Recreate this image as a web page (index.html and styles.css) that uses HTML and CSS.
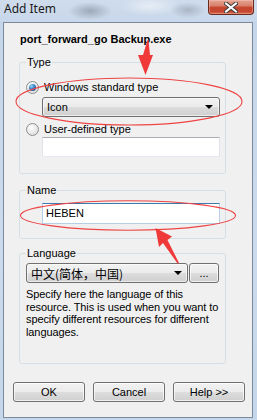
FILE: index.html
```html
<!DOCTYPE html>
<html lang="en">
<head>
  <meta charset="UTF-8">
  <title>Add Item</title>
  <link rel="stylesheet" href="styles.css">
</head>
<body>
  <div class="window">
    <div class="titlebar">
      <span class="title">Add Item</span>
      <span class="close-btn">
        <svg width="14" height="11" viewBox="0 0 14 11">
          <path d="M2 1.5 L12 9.5 M12 1.5 L2 9.5" stroke="#3a3a3a" stroke-width="4" stroke-linecap="square"/>
          <path d="M2 1.5 L12 9.5 M12 1.5 L2 9.5" stroke="#ffffff" stroke-width="2" stroke-linecap="square"/>
        </svg>
      </span>
    </div>

    <div class="client">
      <div class="filename">port_forward_go Backup.exe</div>

      <fieldset class="group group-type">
        <legend>Type</legend>
        <div class="radio-row"><span class="radio checked"></span>Windows standard type</div>
        <div class="combo indent"><span>Icon</span><span class="combo-arrow"></span></div>
        <div class="radio-row second"><span class="radio"></span>User-defined type</div>
        <div class="textbox indent"></div>
      </fieldset>

      <fieldset class="group group-name">
        <legend>Name</legend>
        <div class="textbox focused indent">HEBEN</div>
      </fieldset>

      <fieldset class="group group-lang">
        <legend>Language</legend>
        <div class="lang-row">
          <div class="combo lang-combo"><span class="cjk">中文(简体，中国)</span><span class="combo-arrow"></span></div>
          <div class="button dots">...</div>
        </div>
        <p class="desc">Specify here the language of this resource. This is used when you want to specify different resources for different languages.</p>
      </fieldset>

      <div class="buttons">
        <div class="button">OK</div>
        <div class="button">Cancel</div>
        <div class="button">Help &gt;&gt;</div>
      </div>
    </div>

    <!-- red annotation marks drawn over the dialog -->
    <svg class="marks" width="257" height="420" viewBox="0 0 257 420">
      <polygon points="147.5,40 148.5,40 150,55 153,55 145.5,75 138,55 143,55" fill="#f03a3a"/>
      <ellipse cx="129" cy="101.5" rx="113" ry="23.5" fill="none" stroke="#ee4444" stroke-width="1.1"/>
      <ellipse cx="128" cy="215.5" rx="107.5" ry="14.7" fill="none" stroke="#ee4444" stroke-width="1.1"/>
      <polygon points="155.5,228 172,236.5 167.5,240 179,263 177.5,263.5 163,243 159,247" fill="#f03a3a"/>
    </svg>
  </div>
</body>
</html>
```

FILE: styles.css
```css
* {
  margin: 0;
  padding: 0;
  box-sizing: border-box;
}

body {
  font-family: 'Liberation Sans', 'Noto Sans CJK SC', sans-serif;
  font-size: 11px;
  line-height: 13px;
  color: #000;
  background: #c8d8eb;
}

.window {
  position: relative;
  width: 257px;
  height: 420px;
  display: flex;
  flex-direction: column;
  padding: 0 4px 2px 3px;
  background: linear-gradient(180deg, #c6d6ea 0%, #cbdaec 60%, #c6d7eb 100%);
}

/* Title bar */
.titlebar {
  height: 22px;
  margin: 0 -4px 0 -3px;
  padding-left: 4px;
  display: flex;
  align-items: flex-start;
  justify-content: space-between;
  background:
    radial-gradient(ellipse 22px 9px at 90px 11px, rgba(120, 130, 142, 0.55), rgba(120, 130, 142, 0)),
    radial-gradient(ellipse 18px 8px at 188px 10px, rgba(130, 138, 150, 0.45), rgba(130, 138, 150, 0)),
    radial-gradient(ellipse 30px 10px at 150px 6px, rgba(255, 255, 255, 0.5), rgba(255, 255, 255, 0)),
    linear-gradient(180deg, #cfdcec 0%, #c8d7ea 100%);
}

.title {
  font-family: 'Noto Sans', sans-serif;
  font-size: 12px;
  line-height: 18px;
  color: #1a1a1a;
}

.close-btn {
  width: 46px;
  height: 15px;
  margin-left: auto;
  margin-right: 3px;
  display: flex;
  align-items: center;
  justify-content: center;
  border: 1px solid #6a2a1e;
  border-top: none;
  border-radius: 0 0 4px 4px;
  background: linear-gradient(180deg, #e4a594 0%, #d8806b 40%, #c4432c 55%, #c84a33 85%, #d9704f 100%);
  box-shadow: inset 0 0 0 1px rgba(255, 210, 200, 0.35);
}

/* Client area */
.client {
  flex: 1;
  display: flex;
  flex-direction: column;
  background: #f0f0f0;
  border: 1px solid #7b8a9b;
}

.filename {
  font-weight: bold;
  margin: 10px 0 0 16px;
}

.group {
  width: 207px;
  margin-left: 15px;
  border: 1px solid #d5dfe5;
  border-radius: 3px;
  padding: 0 5px 0 6px;
  min-width: 0;
}

.group legend {
  padding: 0 1px;
  line-height: 13px;
}

.group-type {
  margin-top: 10px;
  padding-top: 12px;
  padding-bottom: 16px;
}

.group-name {
  margin-top: 10px;
  padding-top: 6px;
  padding-bottom: 14px;
}

.group-lang {
  margin-top: 8px;
  padding-top: 3px;
  padding-bottom: 25px;
}

.radio-row {
  display: flex;
  align-items: center;
  gap: 5px;
  height: 13px;
}

.radio-row.second {
  margin-top: 6px;
}

.radio {
  width: 13px;
  height: 13px;
  border-radius: 50%;
  border: 1px solid #8e8f8f;
  background: radial-gradient(circle at 40% 35%, #ffffff, #dcdcdc 80%);
  display: flex;
  align-items: center;
  justify-content: center;
}

.radio.checked::after {
  content: "";
  width: 7px;
  height: 7px;
  border-radius: 50%;
  background: radial-gradient(circle at 35% 30%, #9fdcf8 0%, #2f7cc8 45%, #173d73 100%);
}

.indent {
  margin-left: 16px;
}

.combo {
  height: 20px;
  margin-top: 3px;
  display: flex;
  align-items: center;
  justify-content: space-between;
  padding: 0 6px 0 4px;
  border: 1px solid #707070;
  border-radius: 3px;
  background: linear-gradient(180deg, #f2f2f2 0%, #ebebeb 50%, #dddddd 51%, #cfcfcf 100%);
  box-shadow: inset 0 0 0 1px rgba(255, 255, 255, 0.6);
}

.combo-arrow {
  width: 0;
  height: 0;
  border-left: 4px solid transparent;
  border-right: 4px solid transparent;
  border-top: 4px solid #000;
}

.textbox {
  height: 20px;
  margin-top: 1px;
  padding: 0 3px;
  display: flex;
  align-items: center;
  background: #fff;
  border: 1px solid #e2e3ea;
  border-top-color: #abadb3;
  border-bottom-color: #e3e9ef;
}

.textbox.focused {
  height: 21px;
  margin-top: 0;
  border-color: #b5cfe7;
  border-top-color: #3d7bad;
}

.lang-row {
  display: flex;
  gap: 1px;
}

.combo.lang-combo {
  width: 162px;
  flex: none;
  margin-top: 0;
  padding-right: 5px;
}

.cjk {
  font-family: 'Noto Sans CJK SC', sans-serif;
  font-size: 12px;
}

.desc {
  margin-top: 5px;
  margin-right: -4px;
  line-height: 12.5px;
  letter-spacing: -0.1px;
}

/* Bottom buttons */
.buttons {
  display: flex;
  gap: 8px;
  margin: 18px 0 0 9px;
}

.button {
  width: 72px;
  height: 20px;
  display: flex;
  align-items: center;
  justify-content: center;
  border: 1px solid #707070;
  border-radius: 3px;
  background: linear-gradient(180deg, #f2f2f2 0%, #ebebeb 50%, #dddddd 51%, #cfcfcf 100%);
  box-shadow: inset 0 0 0 1px rgba(255, 255, 255, 0.7);
}

.button.dots {
  width: 30px;
}

.marks {
  position: absolute;
  top: 0;
  left: 0;
  pointer-events: none;
}
```
